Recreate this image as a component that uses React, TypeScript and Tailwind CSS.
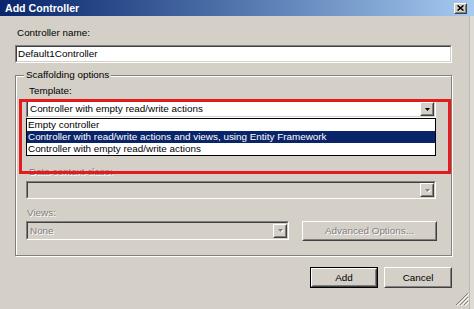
import React from 'react';

const FONT = { fontFamily: '"Liberation Sans", Arial, sans-serif' };

// 2px sunken field, classic look
function Sunken({ className, inner, children }: { className: string; inner: string; children?: React.ReactNode }) {
  return (
    <div className={`border border-t-[#808080] border-l-[#808080] border-r-white border-b-white ${className}`}>
      <div className={`h-full border border-t-[#404040] border-l-[#404040] border-r-[#d4d0c8] border-b-[#d4d0c8] ${inner}`}>
        {children}
      </div>
    </div>
  );
}

function Raised({ className, children }: { className: string; children?: React.ReactNode }) {
  return (
    <div className={`border border-t-white border-l-white border-r-[#404040] border-b-[#404040] bg-[#d4d0c8] ${className}`}>
      <div className="h-full border border-t-[#d4d0c8] border-l-[#d4d0c8] border-r-[#808080] border-b-[#808080] flex items-center justify-center">
        {children}
      </div>
    </div>
  );
}

function Arrow({ disabled }: { disabled?: boolean }) {
  return (
    <svg width="7" height="5" viewBox="0 0 7 5">
      {disabled && <path d="M1 1h5L3.5 4z" transform="translate(1 1)" fill="#ffffff" />}
      <path d="M1 1h5L3.5 4z" fill={disabled ? '#808080' : '#000000'} />
    </svg>
  );
}

function Combo({ className, text, disabled }: { className: string; text?: string; disabled?: boolean }) {
  return (
    <Sunken className={className} inner={`flex items-center ${disabled ? 'bg-[#d4d0c8]' : 'bg-white'}`}>
      <span
        className={`flex-1 pl-[2px] leading-[12px] ${disabled ? 'text-[#808080] [text-shadow:1px_1px_0_#ffffff]' : 'text-black'}`}
      >
        {text}
      </span>
      <Raised className="w-[14px] h-[14px]">
        <Arrow disabled={disabled} />
      </Raised>
    </Sunken>
  );
}

export default function App() {
  return (
    <div className="relative w-[474px] h-[309px] overflow-hidden bg-[#d4d0c8] text-[9.9px] text-black" style={FONT}>
      {/* title bar */}
      <div className="h-[16px] flex items-center justify-between bg-gradient-to-r from-[#0a246a] to-[#a6caf0] pl-[5px] pr-[7px]">
        <span className="text-white font-bold text-[10.6px] leading-none">Add Controller</span>
        <Raised className="w-[13px] h-[11px]">
          <svg width="7" height="6" viewBox="0 0 7 6">
            <path d="M0.5 0.5l6 5M6.5 0.5l-6 5" stroke="#000" strokeWidth="1.6" />
          </svg>
        </Raised>
      </div>

      <div className="flex">
        <div className="flex-1 pl-[15px] pr-[17px]">
          <div className="mt-[11px] h-[12px] leading-[12px] pl-[2px]">Controller name:</div>
          <Sunken className="mt-[6px] h-[18px] w-[437px]" inner="bg-white flex items-center">
            <span className="pl-[1px] leading-[12px]">Default1Controller</span>
          </Sunken>

          {/* Scaffolding options group */}
          <div className="relative mt-[12px] w-[437px] h-[181px] border border-[#808080] shadow-[inset_1px_1px_0_#ffffff,1px_1px_0_#ffffff]">
            <span className="absolute -top-[7px] left-[8px] px-[2px] bg-[#d4d0c8] leading-[12px]">Scaffolding options</span>

            <div className="pl-[10px]">
              <div className="mt-[9px] h-[12px] leading-[12px] pl-[3px]">Template:</div>
              <Combo className="mt-[3px] h-[18px] w-[410px]" text="Controller with empty read/write actions" />

              <div className="mt-[48px] h-[12px] leading-[12px] pl-[3px] text-[#808080] [text-shadow:1px_1px_0_#ffffff]">
                Data context class:
              </div>
              <Combo className="mt-[3px] h-[18px] w-[410px]" disabled />

              <div className="mt-[8px] h-[12px] leading-[12px] pl-[1px] text-[#808080] [text-shadow:1px_1px_0_#ffffff]">
                Views:
              </div>
              <div className="mt-[2px] flex items-start gap-[13px]">
                <Combo className="h-[19px] w-[263px]" text="None" disabled />
                <Raised className="w-[135px] h-[20px]">
                  <span className="text-[#808080] [text-shadow:1px_1px_0_#ffffff] leading-[12px]">Advanced Options...</span>
                </Raised>
              </div>
            </div>

            {/* open dropdown list */}
            <div className="absolute left-[10px] top-[42px] w-[410px] h-[38px] border border-black bg-white">
              <div className="h-[12px] leading-[12px] pl-[1px]">Empty controller</div>
              <div className="h-[12px] leading-[12px] pl-[1px] bg-[#0a246a] text-white">
                Controller with read/write actions and views, using Entity Framework
              </div>
              <div className="h-[12px] leading-[12px] pl-[1px]">Controller with empty read/write actions</div>
            </div>
          </div>

          <div className="mt-[11px] flex justify-end gap-[6px] w-[437px]">
            <div className="border border-black w-[68px] h-[21px]">
              <Raised className="h-full">
                <span className="leading-[12px]">Add</span>
              </Raised>
            </div>
            <Raised className="w-[68px] h-[21px]">
              <span className="leading-[12px]">Cancel</span>
            </Raised>
          </div>
        </div>
        <div className="w-[5px] h-[293px] border-l border-[#bdb9b0] bg-[#dedbd3]" />
      </div>

      {/* annotation frame */}
      <div className="absolute left-[19px] top-[99px] w-[432px] h-[75px] border-[3px] border-[#e51b1b]" />

      {/* size grip */}
      <svg className="absolute right-[5px] bottom-[3px]" width="14" height="14" viewBox="0 0 14 14">
        <path d="M13 1L1 13M13 5L5 13M13 9L9 13" stroke="#808080" strokeWidth="1" />
        <path d="M14 2L2 14M14 6L6 14M14 10L10 14" stroke="#ffffff" strokeWidth="1" />
      </svg>
    </div>
  );
}
